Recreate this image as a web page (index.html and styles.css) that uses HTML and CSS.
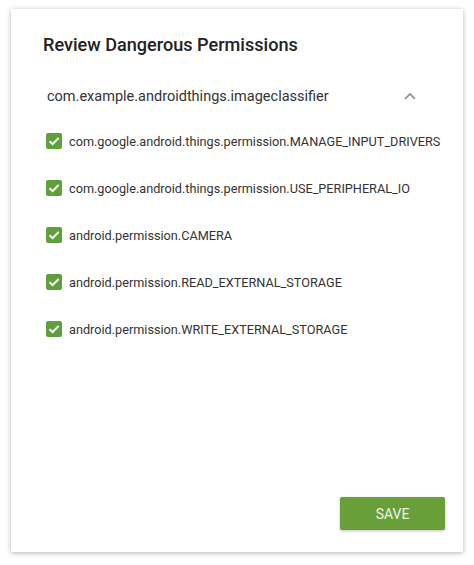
FILE: index.html
```html
<!DOCTYPE html>
<html lang="en">
  <head>
    <meta charset="UTF-8" />
    <title>Review Dangerous Permissions</title>
    <link rel="stylesheet" href="styles.css">
  </head>
  <body>
    <div class="dialog">
      <h1>Review Dangerous Permissions</h1>

      <div class="package">
        <span class="package-name">com.example.androidthings.imageclassifier</span>
        <svg class="chevron" width="14" height="10" viewBox="0 0 14 10">
          <path d="M2 8 L7 3 L12 8" fill="none" stroke="#8a8a8a" stroke-width="1.6" />
        </svg>
      </div>

      <div class="permissions">
        <label class="perm">
          <span class="box"><svg width="16" height="16" viewBox="0 0 16 16"><path d="M3.5 8.2 L6.6 11.2 L12.6 5" fill="none" stroke="#fff" stroke-width="2" /></svg></span>
          com.google.android.things.permission.MANAGE_INPUT_DRIVERS
        </label>
        <label class="perm">
          <span class="box"><svg width="16" height="16" viewBox="0 0 16 16"><path d="M3.5 8.2 L6.6 11.2 L12.6 5" fill="none" stroke="#fff" stroke-width="2" /></svg></span>
          com.google.android.things.permission.USE_PERIPHERAL_IO
        </label>
        <label class="perm">
          <span class="box"><svg width="16" height="16" viewBox="0 0 16 16"><path d="M3.5 8.2 L6.6 11.2 L12.6 5" fill="none" stroke="#fff" stroke-width="2" /></svg></span>
          android.permission.CAMERA
        </label>
        <label class="perm">
          <span class="box"><svg width="16" height="16" viewBox="0 0 16 16"><path d="M3.5 8.2 L6.6 11.2 L12.6 5" fill="none" stroke="#fff" stroke-width="2" /></svg></span>
          android.permission.READ_EXTERNAL_STORAGE
        </label>
        <label class="perm">
          <span class="box"><svg width="16" height="16" viewBox="0 0 16 16"><path d="M3.5 8.2 L6.6 11.2 L12.6 5" fill="none" stroke="#fff" stroke-width="2" /></svg></span>
          android.permission.WRITE_EXTERNAL_STORAGE
        </label>
      </div>

      <div class="actions">
        <button class="save-btn">SAVE</button>
      </div>
    </div>
  </body>
</html>
```

FILE: styles.css
```css
body {
  margin: 0;
  padding: 9px 11px 13px 11px;
  background-color: #fff;
  font-family: Roboto, "Liberation Sans", sans-serif;
}

.dialog {
  height: 543px;
  box-sizing: border-box;
  background-color: #fff;
  box-shadow: 0 1px 5px rgba(0, 0, 0, 0.3);
  padding: 25px 18px 22px 32px;
  display: flex;
  flex-direction: column;
}

h1 {
  margin: 0;
  font-size: 18.1px;
  font-weight: 500;
  color: #222;
  line-height: 22px;
}

.package {
  margin-top: 29px;
  display: flex;
  align-items: center;
  justify-content: space-between;
  padding: 0 28px 0 4px;
  height: 22px;
}

.package-name {
  font-size: 14.5px;
  color: #333;
}

.chevron {
  display: block;
}

.permissions {
  margin-top: 26px;
  display: flex;
  flex-direction: column;
  gap: 31px;
}

.perm {
  display: flex;
  align-items: center;
  height: 16px;
  padding-left: 3px;
  font-size: 12.7px;
  color: #333;
}

.box {
  width: 16px;
  height: 16px;
  background-color: #5fa03a;
  border-radius: 2px;
  margin-right: 7px;
  flex-shrink: 0;
}

.box svg {
  display: block;
}

.actions {
  margin-top: auto;
  display: flex;
  justify-content: flex-end;
}

.save-btn {
  width: 105px;
  height: 33px;
  background-color: #689f38;
  color: #eef5e8;
  border: none;
  border-radius: 2px;
  font-family: Roboto, "Liberation Sans", sans-serif;
  font-size: 14px;
  box-shadow: 0 1px 3px rgba(0, 0, 0, 0.25);
}
```
